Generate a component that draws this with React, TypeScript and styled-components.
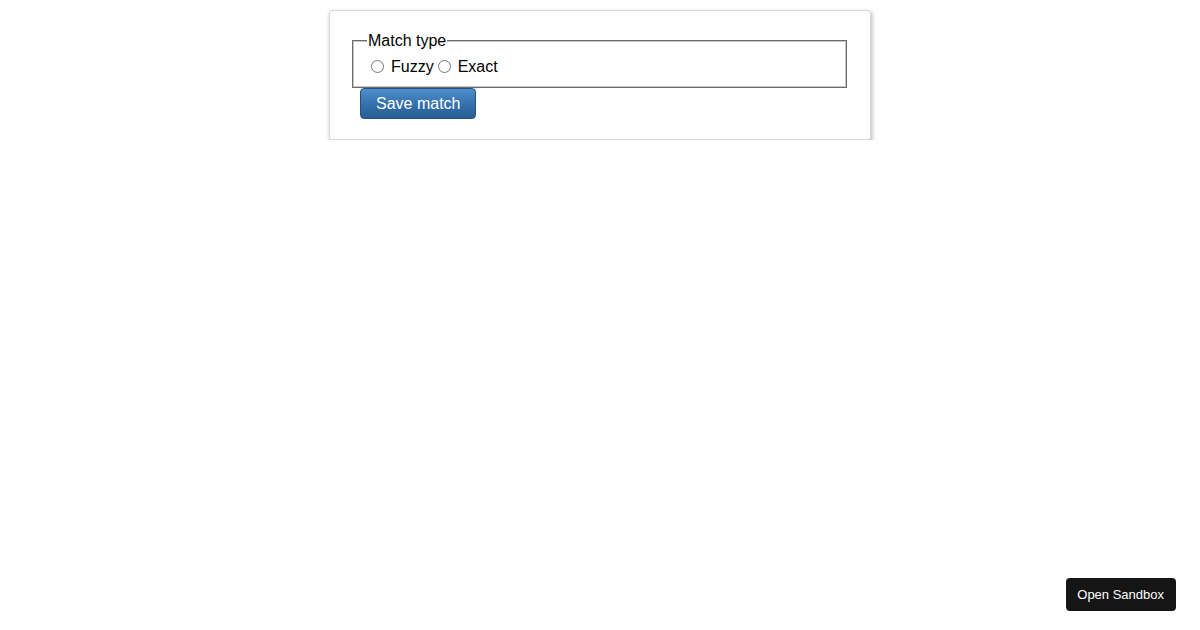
import React, { useState } from 'react'
import styled, { createGlobalStyle } from 'styled-components'

const GlobalStyle = createGlobalStyle`
  body {
    margin: 0;
    background: #fff;
    font-family: "Liberation Sans", Arial, sans-serif;
    font-size: 16px;
    color: #000;
  }
`

type MatchType = 'fuzzy' | 'exact'

const App = () => {
  const [matchType, setMatchType] = useState<MatchType | undefined>(undefined)

  return (
    <>
      <GlobalStyle />
      <Card>
        <Fieldset>
          <Legend>Match type</Legend>
          <Options>
            <Option>
              <Radio
                type="radio"
                name="matchType"
                checked={matchType === 'fuzzy'}
                onChange={() => setMatchType('fuzzy')}
              />
              Fuzzy
            </Option>
            <Option>
              <Radio
                type="radio"
                name="matchType"
                checked={matchType === 'exact'}
                onChange={() => setMatchType('exact')}
              />
              Exact
            </Option>
          </Options>
        </Fieldset>
        <SaveButton>Save match</SaveButton>
      </Card>
      <SandboxButton>Open Sandbox</SandboxButton>
    </>
  )
}

export default App

const Card = styled.div`
  box-sizing: border-box;
  width: 542px;
  margin: 10px auto 0;
  padding: 20px 21px 20px 20px;
  background: #fff;
  border: 1px solid #d8d8d8;
  border-radius: 3px;
  box-shadow: 1px 2px 4px rgba(0, 0, 0, 0.3);
`

const Fieldset = styled.fieldset`
  margin: 0 2px;
  padding: 8px 14px 11px 13px;
  border: 1px solid #6c6c6c;
  box-shadow: inset 0 0 0 1px #c4c4c4;
`

const Legend = styled.legend`
  position: relative;
  top: 1px;
  padding: 0 1px;
  margin-left: 1px;
  line-height: 18px;
  background: #fff;
`

const Options = styled.div`
  display: flex;
  align-items: center;
  line-height: 19px;
`

const Option = styled.label`
  display: flex;
  align-items: center;
  & + & input {
    margin-left: 4px;
  }
`

const Radio = styled.input`
  width: 13px;
  height: 13px;
  margin: 0 7px 0 5px;
  accent-color: #1a73e8;
`

const SaveButton = styled.button`
  display: block;
  margin: 0 0 0 10px;
  height: 31px;
  padding: 0 15px;
  font-family: "Liberation Sans", Arial, sans-serif;
  font-size: 16px;
  color: #fff;
  background: linear-gradient(to bottom, #4d8fcd 0%, #3672ad 50%, #285e94 100%);
  border: 1px solid #22527f;
  border-radius: 4px;
  cursor: pointer;
`

const SandboxButton = styled.button`
  position: fixed;
  right: 24px;
  bottom: 19px;
  height: 33px;
  padding: 0 12px 0 11px;
  font-family: "Liberation Sans", Arial, sans-serif;
  font-size: 13px;
  color: #fff;
  background: #151515;
  border: none;
  border-radius: 4px;
`
